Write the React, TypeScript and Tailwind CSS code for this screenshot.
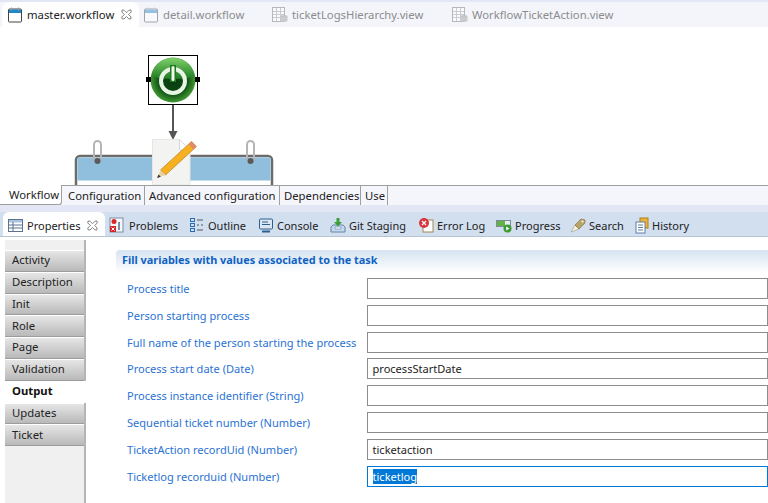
const font = "font-['Noto_Sans',sans-serif]";

function CalendarIcon({ faded }: { faded?: boolean }) {
  return (
    <svg width="15" height="16" viewBox="0 0 15 16" className={faded ? "opacity-45" : ""}>
      <rect x="0.5" y="2" width="13" height="13" rx="1" fill="#fff" stroke="#444" />
      <rect x="1" y="2.5" width="12" height="3.5" fill="#1f86c8" />
      <rect x="3" y="0.5" width="1" height="3" fill="#999" />
      <rect x="10" y="0.5" width="1" height="3" fill="#999" />
    </svg>
  );
}

function ViewFileIcon() {
  return (
    <svg width="16" height="16" viewBox="0 0 16 16" className="opacity-55">
      <rect x="0.5" y="0.5" width="12" height="14" fill="#fff" stroke="#888" />
      <path d="M1 4.5h11M1 7.5h11M1 10.5h11M4.5 1v13M8.5 1v13" stroke="#aaa" />
      <ellipse cx="12" cy="9.5" rx="3.5" ry="1.5" fill="#999" />
      <path d="M8.5 9.5v4.5c0 1 7 1 7 0V9.5z" fill="#aaa" />
    </svg>
  );
}

function CloseX() {
  return (
    <svg width="11" height="11" viewBox="0 0 11 11">
      <path d="M1 1l2 .2 2.500 2.500L8 1.200 10 1l.2 2-2.500 2.500L10 8l-.2 2-2-.2-2.300-2.300L3 10l-2-.2L.8 8l2.500-2.500L.8 3z" fill="#fff" stroke="#777" strokeWidth="0.9" />
    </svg>
  );
}

const problemsIcon = (
  <svg width="15" height="16" viewBox="0 0 15 16">
    <rect x="1" y="1" width="13" height="14" fill="#f4f7fb" stroke="#7f8ea3" />
    <circle cx="5" cy="4.5" r="2.5" fill="#d9252a" />
    <rect x="1" y="9" width="6" height="6" fill="#d9252a" />
    <path d="M2.5 10.5l3 3M5.5 10.5l-3 3" stroke="#fff" />
    <path d="M10 5v8" stroke="#7f8ea3" strokeWidth="2" />
  </svg>
);
const outlineIcon = (
  <svg width="14" height="16" viewBox="0 0 14 16" fill="none" stroke="#2a6db0">
    <rect x="0.5" y="1.5" width="4" height="3" />
    <rect x="0.5" y="6.5" width="4" height="3" />
    <rect x="0.5" y="11.5" width="4" height="3" />
    <path d="M7 3h6M7 8h2M11 8h2M7 13h6" stroke="#555" />
  </svg>
);
const consoleIcon = (
  <svg width="14" height="15" viewBox="0 0 14 15">
    <rect x="0.5" y="1" width="13" height="10" rx="1" fill="#dbe6f2" stroke="#2d5f8f" />
    <path d="M3 4h6M3 6.5h8" stroke="#2d5f8f" />
    <path d="M3 13.5h8" stroke="#2d5f8f" strokeWidth="2" />
  </svg>
);
const gitIcon = (
  <svg width="16" height="16" viewBox="0 0 16 16">
    <path d="M1 10l2-2h10l2 2v5H1z" fill="#c7d8ea" stroke="#5f86ad" />
    <path d="M5 10h6v2H5z" fill="#fff" stroke="#5f86ad" strokeWidth="0.6" />
    <path d="M6.5 1h3v4h2.5L8 9.5 4 5h2.5z" fill="#3f9e3a" />
  </svg>
);
const errorIcon = (
  <svg width="16" height="16" viewBox="0 0 16 16">
    <rect x="5" y="3" width="10" height="12" fill="#fff" stroke="#a08a50" />
    <circle cx="6" cy="6" r="5" fill="#d9353a" />
    <path d="M4 4l4 4M8 4l-4 4" stroke="#fff" strokeWidth="1.2" />
  </svg>
);
const progressIcon = (
  <svg width="16" height="16" viewBox="0 0 16 16">
    <rect x="0.5" y="3.5" width="14" height="6" fill="#e8eef5" stroke="#7c8b9b" />
    <rect x="1" y="4" width="8" height="5" fill="#63b344" />
    <circle cx="11.5" cy="11.5" r="4" fill="#3d9a34" />
    <path d="M10.2 9.5l3.2 2-3.2 2z" fill="#fff" />
  </svg>
);
const searchIcon = (
  <svg width="17" height="17" viewBox="0 0 17 17">
    <path d="M1 15l4-7 4 4z" fill="#f5f0e0" stroke="#9a9a8a" strokeWidth="0.6" />
    <path d="M5 8l6-6 4 1 0 3-6 6z" fill="#b9a468" stroke="#7b6a3e" strokeWidth="0.6" />
    <circle cx="12.5" cy="4.5" r="1" fill="#fff" />
  </svg>
);
const historyIcon = (
  <svg width="14" height="17" viewBox="0 0 14 17">
    <rect x="5" y="1" width="8" height="10" fill="#eeb33c" stroke="#b07f1e" />
    <rect x="1" y="5" width="9" height="11" fill="#fff" stroke="#5f7fa5" />
    <path d="M3 8h5M3 10.5h5M3 13h5" stroke="#5f7fa5" />
  </svg>
);

const viewTabs = [
  { name: "Problems", icon: problemsIcon, tab: "ml-[4px] w-[81px]", slot: "w-[20px]" },
  { name: "Outline", icon: outlineIcon, tab: "w-[69px]", slot: "w-[18px]" },
  { name: "Console", icon: consoleIcon, tab: "w-[71px]", slot: "w-[18px]" },
  { name: "Git Staging", icon: gitIcon, tab: "w-[88px]", slot: "w-[19px]" },
  { name: "Error Log", icon: errorIcon, tab: "w-[78px]", slot: "w-[19px]" },
  { name: "Progress", icon: progressIcon, tab: "w-[74px]", slot: "w-[19px]" },
  { name: "Search", icon: searchIcon, tab: "w-[65px]", slot: "w-[19px]" },
  { name: "History", icon: historyIcon, tab: "w-[60px]", slot: "w-[17px]" },
];

const sideItems = ["Activity", "Description", "Init", "Role", "Page", "Validation", "Output", "Updates", "Ticket"];

const fields = [
  { label: "Process title", value: "" },
  { label: "Person starting process", value: "" },
  { label: "Full name of the person starting the process", value: "" },
  { label: "Process start date (Date)", value: "processStartDate" },
  { label: "Process instance identifier (String)", value: "" },
  { label: "Sequential ticket number (Number)", value: "" },
  { label: "TicketAction recordUid (Number)", value: "ticketaction" },
  { label: "Ticketlog recorduid (Number)", value: "ticketlog", focused: true },
];

function Diagram() {
  return (
    <div className="relative h-[158px] bg-white overflow-hidden">
      {/* start node */}
      <div className="absolute left-[148px] top-[28px] w-[50px] h-[50px] border border-black bg-white">
        <svg width="48" height="48" viewBox="0 0 48 48">
          <defs>
            <radialGradient id="pw" cx="50%" cy="50%" r="55%">
              <stop offset="0%" stopColor="#0b3a10" />
              <stop offset="55%" stopColor="#0c4a12" />
              <stop offset="100%" stopColor="#4fae3c" />
            </radialGradient>
            <linearGradient id="pwTop" x1="0" y1="0" x2="0" y2="1">
              <stop offset="0%" stopColor="#7ed06a" />
              <stop offset="100%" stopColor="#1f7a22" />
            </linearGradient>
          </defs>
          <circle cx="24" cy="24" r="22.5" fill="url(#pw)" />
          <path d="M3 20C4 9 13 2 24 2s20 7 21 18c-6 4-36 4-42 0z" fill="url(#pwTop)" />
          <circle cx="24" cy="25" r="12" fill="none" stroke="#e8f5e4" strokeWidth="4" />
          <rect x="21" y="9" width="6" height="17" fill="#1f7a22" />
          <rect x="22.500" y="10" width="3" height="15" rx="1.500" fill="#eef8ea" />
        </svg>
        <span className="absolute left-[-3px] top-[21px] w-[5px] h-[5px] bg-black" />
        <span className="absolute right-[-3px] top-[21px] w-[5px] h-[5px] bg-black" />
      </div>
      {/* connector */}
      <svg className="absolute left-[168px] top-[78px]" width="10" height="36" viewBox="0 0 10 36">
        <rect x="4" y="0" width="2" height="26" fill="#555" />
        <path d="M0.500 26h9L5 35z" fill="#555" />
      </svg>
      {/* calendar node */}
      <svg className="absolute left-[72px] top-[112px]" width="204" height="46" viewBox="0 0 204 46">
        <rect x="4" y="17" width="196" height="40" rx="4" fill="#fff" stroke="#6b6b6b" strokeWidth="2.500" />
        <rect x="5.500" y="18.500" width="193" height="23" fill="#8fbfdc" />
        <g fill="none" stroke="#b5b5b5" strokeWidth="2">
          <rect x="22" y="2" width="7" height="21" rx="3.500" />
          <rect x="175" y="2" width="7" height="21" rx="3.500" />
        </g>
        <circle cx="25.500" cy="22" r="3" fill="#5a5a5a" />
        <circle cx="178.500" cy="22" r="3" fill="#5a5a5a" />
      </svg>
      {/* task icon */}
      <svg className="absolute left-[152px] top-[112px]" width="46" height="46" viewBox="0 0 46 46">
        <path d="M0.500 0.500h27l10.500 10.500v35H0.500z" fill="#f3f3f1" stroke="#e6e6e4" />
        <path d="M27.500 0.500v10.500h10.500z" fill="#fff" stroke="#d8d8d8" />
        <path d="M8.600 30.900L39.600 2.400l4.800 5.200-31 28.500z" fill="#f5b120" stroke="#b87a10" strokeWidth="0.7" />
        <path d="M36.500 5.300l3.100-2.900 4.800 5.200-3.100 2.900z" fill="#e58a6a" />
        <path d="M5 39l3.600-8.100 4.800 5.200z" fill="#e9d2a8" />
        <path d="M5 39l1.600-3.600 2.200 2.400z" fill="#333" />
      </svg>
    </div>
  );
}

export default function App() {
  return (
    <div className={`${font} w-[768px] h-[503px] overflow-hidden bg-[#e3e7f5] text-[11.3px] leading-none pt-[2px]`}>
      {/* editor tabs */}
      <div className="flex h-[25px] bg-[#f3f5fb]">
        <div className="flex items-center w-[137px] shrink-0 ml-[2px] pl-[6px] bg-white rounded-t-[7px]">
          <CalendarIcon />
          <span className="ml-[4px] w-[94px] text-[#222]">master.workflow</span>
          <CloseX />
        </div>
        <div className="flex items-center gap-[4px] ml-[5px] w-[128px] shrink-0 text-[#8c8c8c]">
          <CalendarIcon faded />
          <span>detail.workflow</span>
        </div>
        <div className="flex items-center gap-[4px] w-[180px] shrink-0 text-[#8c8c8c]">
          <ViewFileIcon />
          <span>ticketLogsHierarchy.view</span>
        </div>
        <div className="flex items-center gap-[4px] w-[170px] shrink-0 text-[#8c8c8c]">
          <ViewFileIcon />
          <span>WorkflowTicketAction.view</span>
        </div>
      </div>

      <Diagram />

      {/* editor bottom tabs */}
      <div className="relative flex h-[20px] bg-[#f5f6fc] border-t border-[#9f9f9f] text-[#222] whitespace-nowrap">
        <div className="flex items-center w-[62px] h-[20px] -mt-px pl-[9px] bg-white border-r border-b border-[#9f9f9f] rounded-br-[3px] z-10">Workflow</div>
        <div className="flex items-center w-[83px] pl-[6px] border-r border-[#9f9f9f]">Configuration</div>
        <div className="flex items-center w-[135px] pl-[4px] border-r border-[#9f9f9f]">Advanced configuration</div>
        <div className="flex items-center w-[81px] pl-[4px] border-r border-[#9f9f9f]">Dependencies</div>
        <div className="flex items-center w-[27px] pl-[4px] border-r border-[#9f9f9f]">Use</div>
      </div>

      <div className="h-[7px]" />

      {/* view tabs */}
      <div className="flex h-[25px] bg-[#d2dfef] border-b border-[#b9c4d2] text-[#222] text-[11px]">
        <div className="flex items-center w-[102px] ml-[3px] shrink-0 pl-[5px] pt-[2px] bg-white rounded-t-[6px]">
          <svg width="15" height="13" viewBox="0 0 15 13" fill="none" stroke="#5b7390">
            <rect x="0.500" y="0.500" width="14" height="12" fill="#fff" />
            <rect x="1" y="1" width="13" height="2.500" fill="#a9c3de" stroke="none" />
            <path d="M1 6h13M1 9h13M5 3v9" />
          </svg>
          <span className="ml-[4px] w-[60px]">Properties</span>
          <CloseX />
        </div>
        {viewTabs.map((t) => (
          <div key={t.name} className={`flex items-center shrink-0 pt-[2px] ${t.tab}`}>
            <span className={`flex ${t.slot}`}>{t.icon}</span>
            <span>{t.name}</span>
          </div>
        ))}
      </div>

      {/* properties body */}
      <div className="flex h-[266px] bg-white pl-[5px] pt-[3px]">
        <div className="w-[81px] shrink-0 bg-[#f0f0f0] border-r-2 border-[#b5b5b5] pt-[10px]">
          {sideItems.map((item) =>
            item === "Output" ? (
              <div key={item} className="flex items-center h-[21.800px] w-[81px] pl-[7px] pb-[2px] bg-white font-bold text-[#111]">{item}</div>
            ) : (
              <div key={item} className="flex items-center h-[21.800px] pl-[7px] pb-[2px] text-[#222] border-t border-b border-t-white border-b-[#9c9c9c] bg-gradient-to-b from-[#e6e6e6] to-[#b9b9b9]">{item}</div>
            )
          )}
        </div>

        <div className="flex-1 min-w-0 pl-[30px] pt-[10px]">
          <div className="flex items-center h-[23px] pl-[6px] pb-[3px] rounded-tl-[4px] bg-gradient-to-b from-[#d6e3f1] to-white text-[#0f62c4] font-bold text-[10.9px]">
            Fill variables with values associated to the task
          </div>
          <div className="flex flex-col gap-[5.800px] mt-[5px] text-[11.05px]">
            {fields.map((f) => (
              <div key={f.label} className="flex items-center h-[21px]">
                <span className="w-[251px] pl-[11px] shrink-0 whitespace-nowrap text-[#2a72d4]">{f.label}</span>
                <div className={`flex-1 h-[21px] flex items-center pl-[4.500px] bg-white text-[#222] border ${f.focused ? "border-[#0078d7]" : "border-[#8c8c8c]"}`}>
                  {f.focused ? (
                    <span className="flex items-center h-[15px] bg-[#0078d7] text-white">{f.value}</span>
                  ) : (
                    f.value
                  )}
                </div>
              </div>
            ))}
          </div>
        </div>
      </div>
    </div>
  );
}
